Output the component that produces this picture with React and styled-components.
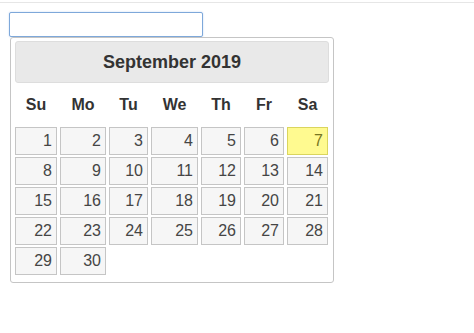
import styled, { createGlobalStyle } from "styled-components";

const GlobalStyle = createGlobalStyle`
  body {
    margin: 0;
    background: #fff;
    font-family: "Liberation Sans", Arial, sans-serif;
  }
`;

const COLUMNS = "42px 46px 39px 47px 40px 40px 41px";
const DAY_NAMES = ["Su", "Mo", "Tu", "We", "Th", "Fr", "Sa"];
const FIRST_WEEKDAY = 0; // Sept 1 2019 is a Sunday
const DAYS_IN_MONTH = 30;
const HIGHLIGHT = 7;

const Page = styled.div`
  padding-top: 2px;
  height: 333px;
  box-sizing: border-box;
`;

const Rule = styled.div`
  height: 1px;
  background: #e6e6e6;
`;

const Field = styled.div`
  position: relative;
  margin: 9px 0 0 9px;
  width: 194px;
`;

const Input = styled.input`
  display: block;
  box-sizing: border-box;
  width: 194px;
  height: 25px;
  border: 1px solid #7ea8da;
  border-radius: 2px;
  box-shadow: 0 0 2px rgba(80, 140, 220, 0.35);
  outline: none;
  padding: 0 3px;
  font: 14px "Liberation Sans", Arial, sans-serif;
`;

const Popup = styled.div`
  position: absolute;
  top: 25px;
  left: 1px;
  width: 324px;
  box-sizing: border-box;
  padding: 3px 4px 7px;
  border: 1px solid #c5c5c5;
  border-radius: 3px;
  background: #fff;
  color: #333;
`;

const Header = styled.div`
  height: 42px;
  box-sizing: border-box;
  display: flex;
  align-items: center;
  justify-content: center;
  background: #e9e9e9;
  border: 1px solid #dddddd;
  border-radius: 3px;
  font-size: 18px;
  font-weight: bold;
  color: #333;
`;

const Grid = styled.div`
  display: grid;
  grid-template-columns: ${COLUMNS};
  column-gap: 3px;
  row-gap: 2px;
`;

const DayNames = styled(Grid)`
  height: 44px;
  align-items: center;
`;

const DayName = styled.div`
  text-align: center;
  font-size: 16px;
  font-weight: bold;
  color: #333;
  padding-bottom: 1px;
`;

const Day = styled.div`
  height: 28px;
  box-sizing: border-box;
  display: flex;
  align-items: center;
  justify-content: flex-end;
  padding-right: 4px;
  font-size: 16px;
  border: 1px solid ${(p) => (p.$active ? "#dad55e" : "#c5c5c5")};
  background: ${(p) => (p.$active ? "#fffa90" : "#f6f6f6")};
  color: ${(p) => (p.$active ? "#777620" : "#454545")};
`;

export default function App() {
  const cells = [];
  for (let i = 0; i < FIRST_WEEKDAY; i++) cells.push(<div key={`e${i}`} />);
  for (let d = 1; d <= DAYS_IN_MONTH; d++) {
    cells.push(
      <Day key={d} $active={d === HIGHLIGHT}>
        {d}
      </Day>
    );
  }

  return (
    <Page>
      <GlobalStyle />
      <Rule />
      <Field>
        <Input type="text" />
        <Popup>
          <Header>September 2019</Header>
          <DayNames>
            {DAY_NAMES.map((n) => (
              <DayName key={n}>{n}</DayName>
            ))}
          </DayNames>
          <Grid>{cells}</Grid>
        </Popup>
      </Field>
    </Page>
  );
}
